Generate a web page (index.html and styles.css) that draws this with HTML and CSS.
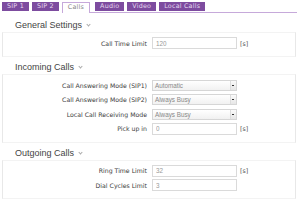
FILE: index.html
```html
<!DOCTYPE html>
<html lang="en">
<head>
    <meta charset="UTF-8">
    <meta name="viewport" content="width=device-width, initial-scale=1.0">
    <title>Calls</title>
    <link rel="stylesheet" href="styles.css">
</head>
<body>
    <div class="tabs">
        <div class="tab">SIP 1</div>
        <div class="tab">SIP 2</div>
        <div class="tab active">Calls</div>
        <div class="tab">Audio</div>
        <div class="tab">Video</div>
        <div class="tab">Local Calls</div>
    </div>
    <div class="tab-rule"></div>

    <div class="section">
        <div class="section-title">General Settings <span class="chevron"></span></div>
        <div class="box">
            <div class="row">
                <label>Call Time Limit</label>
                <input class="field" type="text" value="120">
                <span class="unit">[s]</span>
            </div>
        </div>
    </div>

    <div class="section">
        <div class="section-title">Incoming Calls <span class="chevron"></span></div>
        <div class="box">
            <div class="row">
                <label>Call Answering Mode (SIP1)</label>
                <div class="select"><span>Automatic</span><span class="arrow"></span></div>
            </div>
            <div class="row">
                <label>Call Answering Mode (SIP2)</label>
                <div class="select"><span>Always Busy</span><span class="arrow"></span></div>
            </div>
            <div class="row">
                <label>Local Call Receiving Mode</label>
                <div class="select"><span>Always Busy</span><span class="arrow"></span></div>
            </div>
            <div class="row">
                <label>Pick up in</label>
                <input class="field" type="text" value="0">
                <span class="unit">[s]</span>
            </div>
        </div>
    </div>

    <div class="section">
        <div class="section-title">Outgoing Calls <span class="chevron"></span></div>
        <div class="box">
            <div class="row">
                <label>Ring Time Limit</label>
                <input class="field" type="text" value="32">
                <span class="unit">[s]</span>
            </div>
            <div class="row">
                <label>Dial Cycles Limit</label>
                <input class="field" type="text" value="3">
            </div>
        </div>
    </div>
</body>
</html>
```

FILE: styles.css
```css
body {
    margin: 0;
    font-family: "DejaVu Sans", sans-serif;
    background: #fff;
    color: #333;
}
.tabs {
    display: flex;
    gap: 3px;
    margin: 2px 0 0 2px;
    height: 10px;
}
.tab {
    height: 9px;
    line-height: 9px;
    padding: 0 5px;
    font-size: 6.4px;
    letter-spacing: 0.2px;
    color: #e4d8ee;
    background: #7d4c9f;
}
.tab.active {
    height: 10px;
    padding: 0 5px;
    margin: 0 2px 0 0;
    color: #888;
    background: #fff;
    border: 1px solid #c6a9da;
    border-bottom: none;
}
.tab-rule {
    height: 1px;
    margin: 0 3px 0 62px;
    background: #c6a9da;
}
.section {
    margin: 0 4px 0 2px;
}
.section-title {
    height: 14px;
    line-height: 14px;
    margin-top: 5px;
    padding-left: 13px;
    font-family: "Liberation Sans", Arial, sans-serif;
    font-size: 9px;
    color: #444;
}
.section + .section .section-title {
    margin-top: 3px;
}
.chevron {
    display: inline-block;
    width: 2px;
    height: 2px;
    margin-left: 2px;
    border-right: 1px solid #aaa;
    border-bottom: 1px solid #aaa;
    transform: translateY(-2px) rotate(45deg);
}
.box {
    display: flex;
    flex-direction: column;
    gap: 2.5px;
    padding: 4px 0 7px;
    border: 1px solid #e8e8e8;
    border-top-color: #f3f3f3;
    border-bottom-color: #f3f3f3;
}
.row {
    display: grid;
    grid-template-columns: 144px 85px auto;
    column-gap: 5px;
    align-items: center;
    height: 12px;
}
.row label {
    text-align: right;
    font-size: 6.2px;
    color: #3c3c3c;
    white-space: nowrap;
}
.field {
    box-sizing: border-box;
    width: 85px;
    height: 12px;
    margin: 0;
    padding: 0 3px;
    border: 1px solid #dadada;
    font-family: "Liberation Sans", Arial, sans-serif;
    font-size: 6.3px;
    color: #999;
    background: #fff;
    outline: none;
}
.select {
    box-sizing: border-box;
    display: flex;
    align-items: center;
    justify-content: space-between;
    width: 85px;
    height: 11px;
    padding-left: 2px;
    border: 1px solid #d6d6d6;
    background: linear-gradient(#fff, #f1f1f1);
    font-family: "Liberation Sans", Arial, sans-serif;
    font-size: 6.3px;
    color: #888;
}
.arrow {
    position: relative;
    width: 5px;
    height: 9px;
    border-left: 1px solid #ddd;
    background: linear-gradient(#fafafa, #e6e6e6);
}
.arrow::after {
    content: "";
    position: absolute;
    left: 1px;
    top: 4px;
    width: 2px;
    height: 1px;
    background: #333;
}
.unit {
    font-size: 6.3px;
    color: #555;
    margin-left: -2px;
}
```
